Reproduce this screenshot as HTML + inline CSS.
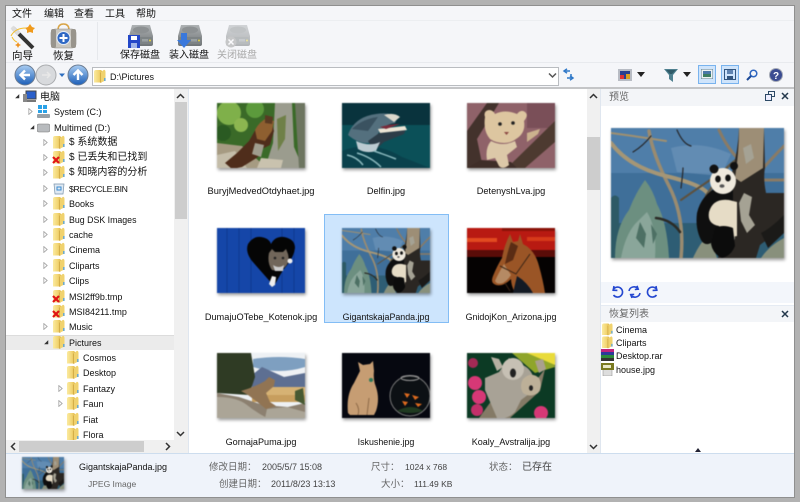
<!DOCTYPE html>
<html><head><meta charset="utf-8"><style>
html,body{margin:0;padding:0;background:#b2b2b2}
#w{position:relative;width:800px;height:502px;overflow:hidden;background:#b2b2b2;font:10px/12px "Liberation Sans","Noto Sans CJK SC",sans-serif;color:#111}
#w div,#w svg{position:absolute}
.t{white-space:nowrap;transform:translateY(2px)}
.c{text-align:center;white-space:nowrap;transform:translateY(1px)}
.g{color:#666}
.l{font-size:9px;transform:translateY(1px)}
.ph{filter:blur(.4px);box-shadow:1px 2px 3px rgba(0,0,0,.4)}
</style></head><body><div id="w">
<svg width="0" height="0" style="left:0;top:0"><defs>
<linearGradient id="fg" x1="0" y1="0" x2="1" y2="0"><stop offset="0" stop-color="#fbeaa0"/><stop offset=".6" stop-color="#f2d573"/><stop offset="1" stop-color="#e0b84c"/></linearGradient>
<linearGradient id="bl" x1="0" y1="0" x2="0" y2="1"><stop offset="0" stop-color="#a9cdf2"/><stop offset="1" stop-color="#1c5fb8"/></linearGradient>
<linearGradient id="dk" x1="0" y1="0" x2="0" y2="1"><stop offset="0" stop-color="#aeb2b4"/><stop offset="1" stop-color="#6f7476"/></linearGradient>
<symbol id="folder" viewBox="0 0 12 14"><path d="M0 3Q0 1 2 1H7L8 2V13.500H0z" fill="url(#fg)"/><path d="M6.500 3.500L10 .8Q11.500 1 11.500 3V11.500L6.500 13.800z" fill="#f0d26e"/><path d="M6.500 3.500V13.800" stroke="#cfa642" stroke-width=".8"/><rect x="10" y="9" width="1.600" height="3" fill="#6fa9c9"/></symbol>
<symbol id="x" viewBox="0 0 8 8"><path d="M1 1l6 6M7 1L1 7" stroke="#e01515" stroke-width="2.200"/></symbol>
<symbol id="op" viewBox="0 0 6 8"><path d="M1 .5L5 4 1 7.500z" fill="#fff" stroke="#a3a3a3"/></symbol>
<symbol id="ex" viewBox="0 0 8 8"><path d="M7 1.500V7H1.500z" fill="#333"/></symbol>
<symbol id="disk" viewBox="0 0 26 24"><path d="M4 1h18l3 11v8a2 2 0 0 1-2 2H3a2 2 0 0 1-2-2v-8z" fill="url(#dk)"/><ellipse cx="13" cy="6" rx="8" ry="3.500" fill="#8d9193"/><rect x="2" y="13" width="22" height="7" rx="1" fill="#7d8385"/><rect x="14" y="15" width="6" height="2.500" fill="#9aa0a2"/><circle cx="22" cy="16.500" r="1" fill="#e8d23c"/></symbol>
<symbol id="panda" viewBox="0 0 173 130" preserveAspectRatio="none">
<rect width="173" height="130" fill="#3f6f99"/>
<rect width="173" height="45" fill="#4f7ea9"/>
<rect y="95" width="173" height="35" fill="#2e5d74"/>
<path d="M60 20q30-8 60 6l-10 22-44-4z" fill="#7397bb" opacity=".55"/>
<path d="M0 70q4-5 8 0v60H0z" fill="#2d5a66"/>
<path d="M4 130q0-30 14-48q6-16 16-30q8 10 12 24q10 18 12 54z" fill="#6c8f80"/>
<path d="M10 130q4-22 14-34q8-8 12-12q10 16 8 46z" fill="#8aa69a"/>
<path d="M25 110l4-16 6 12-2 14zM40 96l6 10-4 10z" fill="#4d7064"/>
<path d="M82 130q6-14 16-24l8 24zM150 130q8-12 23-20v20z" fill="#88907c"/>
<g fill="none" stroke-linecap="round">
<path d="M0 5q30 4 55 8" stroke="#a09070" stroke-width="2"/>
<path d="M38 3q4 24 20 55t12 72" stroke="#9a8b70" stroke-width="3.500"/>
<path d="M0 15q18 24 55 33t42 18" stroke="#a59676" stroke-width="4"/>
<path d="M95 68q4-6 14-20t26-22" stroke="#5f5746" stroke-width="2.500"/>
<path d="M70 72q20-14 44-30" stroke="#5e513e" stroke-width="2"/>
<path d="M108 2q8 18 22 32M173 18q-12 12-26 28M148 52h27" stroke="#8a7b65" stroke-width="3"/>
<path d="M45 90q16 2 24 14" stroke="#2b2b26" stroke-width="2.500"/>
<path d="M66 2q6 14 14 16M22 24q10-6 18-16M70 60q2-16 2-20" stroke="#26272a" stroke-width="1.200"/>
</g>
<path d="M128 0h25l1 40q-2 10 1 25l18 0v36q-14 8-24 16l-4 13h-38l6-38q3-30 8-48q6-20 7-44z" fill="#2b2723"/>
<path d="M128 0h25l-1 40-22 14-6-4q4-25 4-50z" fill="#9d8e76"/>
<path d="M128 75l5-10 8 4-3 18 6 10-8 8-6-12zM117 100l5-4 2 14-4 12-5-4zM132 20l8-4 3 14-8 6z" fill="#a5a294"/>
<path d="M150 105q10-5 23-18v18l-16 15z" fill="#1b1a18"/>
<path d="M86 85q4-18 22-27l14 4v24q-4 10-16 14l-4 14q-8 5-12-2-6-12-4-27z" fill="#0f0f0f"/>
<path d="M98 84q4-14 20-12l8 2v34l-10 2q-6-4-8-12q-12-2-10-14z" fill="#e6dcc6"/>
<path d="M104 100q8-4 18 0l2 18q-4 10-13 12-9-4-11-14z" fill="#0c0c0c"/>
<ellipse cx="112" cy="53" rx="13" ry="13" fill="#efe9dd"/>
<circle cx="103" cy="41" r="4.500" fill="#111"/><circle cx="123" cy="38" r="4" fill="#111"/>
<ellipse cx="107" cy="51" rx="2.800" ry="3.500" fill="#111"/><ellipse cx="117" cy="50" rx="2.800" ry="3.500" fill="#111"/><ellipse cx="111" cy="58" rx="2.500" ry="1.800" fill="#555"/>
</symbol>
</defs></svg>

<!-- window -->
<div style="left:5px;top:5px;width:790px;height:493px;background:#8f8f8f"></div>
<div style="left:6px;top:6px;width:788px;height:491px;background:#fff"></div>
<div style="left:6px;top:6px;width:788px;height:81px;background:#f5f6f9"></div>
<div style="left:6px;top:20px;width:788px;height:1px;background:#eceef1"></div>
<div style="left:6px;top:62px;width:788px;height:1px;background:#e8eaee"></div>
<div style="left:97px;top:22px;width:1px;height:38px;background:#e6e8ec"></div>
<div style="left:6px;top:87px;width:788px;height:2px;background:#c4c5c7"></div>
<!-- menu -->
<div class="t" style="left:12px;top:7px">文件</div>
<div class="t" style="left:44px;top:7px">编辑</div>
<div class="t" style="left:74px;top:7px">查看</div>
<div class="t" style="left:105px;top:7px">工具</div>
<div class="t" style="left:136px;top:7px">帮助</div>
<!-- toolbar icons -->
<svg style="left:9px;top:23px" width="27" height="27" viewBox="0 0 27 27"><path d="M4 5l20 20" stroke="#333" stroke-width="4"/><path d="M3 4l7 7" stroke="#ddd" stroke-width="4"/><path d="M21 1l2 3 3 1-2 2 0 3-3-1-3 1 0-3-2-2 3-1z" fill="#f09a1c"/><path d="M9 19l1 2 2 1-2 1-1 2-1-2-2-1 2-1z" fill="#ee9220"/><path d="M2 13q4-8 15-8M3 14q2 4 5 5" fill="none" stroke="#f5c02e" stroke-width="1"/></svg>
<svg style="left:50px;top:23px" width="27" height="26" viewBox="0 0 27 26"><path d="M8 7q0-6 5.500-6T19 7" fill="none" stroke="#d9a548" stroke-width="1.500"/><rect x="1" y="6" width="25" height="19" rx="4" fill="#c9c6bf" stroke="#8d8a84" stroke-width=".6"/><rect x="1" y="6" width="5" height="19" rx="2" fill="#98948c"/><rect x="21" y="6" width="5" height="19" rx="2" fill="#98948c"/><circle cx="13.500" cy="15" r="6.500" fill="#2f68c4" stroke="#e6eef8"/><path d="M13.500 11v8M9.500 15h8" stroke="#fff" stroke-width="2"/></svg>
<svg style="left:128px;top:24px" width="26" height="24"><use href="#disk" width="26" height="24"/><rect x="0" y="11" width="12" height="13" fill="#2347c8"/><rect x="3" y="12" width="6" height="4" fill="#fff"/><rect x="3" y="19" width="6" height="5" fill="#9fb4e8"/></svg>
<svg style="left:177px;top:24px" width="26" height="24"><use href="#disk" width="26" height="24"/><path d="M3 9h6v7h4l-7 8-7-8h4z" fill="#3a78dc" transform="translate(1 0)"/></svg>
<svg style="left:225px;top:24px;opacity:.5" width="26" height="24"><use href="#disk" width="26" height="24"/><circle cx="6" cy="18" r="5.500" fill="#999"/><path d="M3.500 15.500l5 5M8.500 15.500l-5 5" stroke="#fff" stroke-width="1.500"/></svg>
<div class="t" style="left:12px;top:48px;font-size:10.500px">向导</div>
<div class="t" style="left:53px;top:48px;font-size:10.500px">恢复</div>
<div class="t" style="left:120px;top:48px">保存磁盘</div>
<div class="t" style="left:169px;top:48px">装入磁盘</div>
<div class="t" style="left:217px;top:48px;color:#aaa">关闭磁盘</div>
<!-- nav -->
<svg style="left:14px;top:63px" width="76" height="24" viewBox="0 0 76 24">
<circle cx="32" cy="12" r="10" fill="#d8dadd" stroke="#a9abae"/><path d="M28 12h8m-3-3l3 3-3 3" stroke="#e8e8e8" stroke-width="1.500" fill="none"/>
<circle cx="11" cy="12" r="10" fill="url(#bl)" stroke="#6b7c93"/><path d="M16 12H7m4-4.500L6.500 12l4.500 4.500" stroke="#fff" stroke-width="2.400" fill="none"/>
<path d="M45 10.500h6l-3 3.500z" fill="#2f6fc0"/>
<circle cx="64" cy="12" r="10" fill="url(#bl)" stroke="#6b7c93"/><path d="M64 17V8m-4.500 4L64 7.500l4.500 4.500" stroke="#fff" stroke-width="2.400" fill="none"/></svg>
<div style="left:92px;top:67px;width:465px;height:17px;background:#fff;border:1px solid #b9bcc0"></div>
<svg style="left:94px;top:69px" width="12" height="14"><use href="#folder" width="12" height="14"/></svg>
<div class="t l" style="left:110px;top:70px">D:\Pictures</div>
<svg style="left:548px;top:72px" width="9" height="7"><path d="M1 1.500l3.500 3.500 3.500-3.500" stroke="#555" stroke-width="1.500" fill="none"/></svg>
<svg style="left:562px;top:68px" width="13" height="14" viewBox="0 0 13 14"><path d="M8 3H3.500M5 .8L2 3l3 2.200" stroke="#2f78c8" stroke-width="1.500" fill="none"/><path d="M5 10h4.500M8 7.800l3 2.200-3 2.200M9 6v4" stroke="#2f78c8" stroke-width="1.500" fill="none"/></svg>
<!-- right nav icons -->
<svg style="left:618px;top:69px" width="14" height="12"><rect width="14" height="12" fill="#b8bcc4"/><rect x="2" y="2" width="10" height="8" fill="#27408f"/><rect x="2" y="6" width="4" height="4" fill="#d33"/><rect x="8" y="5" width="4" height="5" fill="#d9a020"/></svg>
<svg style="left:637px;top:72px" width="8" height="5"><path d="M0 0h8L4 5z" fill="#222"/></svg>
<svg style="left:664px;top:69px" width="14" height="13" viewBox="0 0 14 13"><path d="M0 0h14L9 6v7L5 10V6z" fill="#4f8090"/><path d="M2 1h10L8 5H6z" fill="#2f5a68"/></svg>
<svg style="left:683px;top:72px" width="8" height="5"><path d="M0 0h8L4 5z" fill="#222"/></svg>
<div style="left:698px;top:65px;width:16px;height:17px;background:#cfe4fb;border:1px solid #79b3ee"></div>
<svg style="left:701px;top:69px" width="12" height="10"><rect width="12" height="10" fill="#eef2f3" stroke="#5d7f8f"/><rect x="2" y="5" width="8" height="3" fill="#3d7d62"/><rect x="2" y="2" width="8" height="3" fill="#4a78a8"/></svg>
<div style="left:721px;top:65px;width:16px;height:17px;background:#cfe4fb;border:1px solid #79b3ee"></div>
<svg style="left:724px;top:69px" width="12" height="11"><path d="M.5.500h11v10H.5z" fill="#cfe4fb" stroke="#33567f"/><rect x="3" y="1" width="6" height="4" fill="#5f83b0"/><rect x="3" y="7" width="6" height="3" fill="#33567f"/></svg>
<svg style="left:746px;top:69px" width="12" height="12"><circle cx="7.500" cy="4.500" r="3.300" fill="none" stroke="#2f66c0" stroke-width="1.500"/><path d="M5 7L1 11" stroke="#1d4a98" stroke-width="2"/></svg>
<svg style="left:769px;top:68px" width="14" height="14"><circle cx="7" cy="7" r="6.500" fill="#3b4c91"/><circle cx="7" cy="7" r="6.500" fill="none" stroke="#a5aab6"/><text x="7" y="11" text-anchor="middle" font-family="Liberation Sans" font-weight="bold" font-size="10" fill="#fff">?</text></svg>

<!-- tree -->
<div style="left:6px;top:335px;width:168px;height:15px;background:#ebebeb"></div>
<div style="left:6px;top:335px;width:168px;height:1px;background:#dcdcdc"></div>
<svg style="left:14px;top:93px" width="6" height="6"><use href="#ex" width="6" height="6"/></svg>
<svg style="left:23px;top:90px" width="14" height="13"><rect x="3" y="1" width="10" height="8" fill="#2a5fc9" stroke="#444"/><rect x="0" y="4" width="4" height="8" fill="#888"/><rect x="4" y="10" width="9" height="2" fill="#777"/></svg>
<div class="t" style="left:40px;top:90px">电脑</div>
<svg style="left:28px;top:108px" width="5" height="7"><use href="#op" width="5" height="7"/></svg>
<svg style="left:37px;top:104px" width="13" height="14"><rect x="1" y="1" width="4" height="4" fill="#2aa2e8"/><rect x="6" y="1" width="4" height="4" fill="#2aa2e8"/><rect x="1" y="6" width="4" height="3" fill="#2aa2e8"/><rect x="6" y="6" width="4" height="3" fill="#2aa2e8"/><rect y="10" width="13" height="4" rx="1" fill="#98a0a6"/></svg>
<div class="t l" style="left:54px;top:105px">System (C:)</div>
<svg style="left:29px;top:124px" width="6" height="6"><use href="#ex" width="6" height="6"/></svg>
<svg style="left:37px;top:123px" width="13" height="10"><rect y="1" width="13" height="8" rx="2" fill="#b8bbbe" stroke="#777" stroke-width=".6"/></svg>
<div class="t l" style="left:54px;top:121px;font-size:9.400px">Multimed (D:)</div>

<svg style="left:43px;top:139px" width="5" height="7"><use href="#op" width="5" height="7"/></svg><svg style="left:53px;top:135px" width="12" height="14"><use href="#folder" width="12" height="14"/></svg><div class="t" style="left:69px;top:135px;font-size:10px">$ 系统数据</div>
<svg style="left:43px;top:154px" width="5" height="7"><use href="#op" width="5" height="7"/></svg><svg style="left:53px;top:150px" width="12" height="14"><use href="#folder" width="12" height="14"/></svg><svg style="left:52px;top:156px" width="8" height="8"><use href="#x" width="8" height="8"/></svg><div class="t" style="left:69px;top:150px;font-size:10px">$ 已丢失和已找到</div>
<svg style="left:43px;top:169px" width="5" height="7"><use href="#op" width="5" height="7"/></svg><svg style="left:53px;top:165px" width="12" height="14"><use href="#folder" width="12" height="14"/></svg><div class="t" style="left:69px;top:165px;font-size:10px">$ 知晓内容的分析</div>
<svg style="left:43px;top:185px" width="5" height="7"><use href="#op" width="5" height="7"/></svg><svg style="left:53px;top:181px" width="12" height="14"><path d="M1 3h10l-1 10H2z" fill="#dfe9f3" stroke="#7a93aa" stroke-width=".7"/><path d="M4 6h4v3H4z" fill="none" stroke="#3a8cd0"/></svg><div class="t l" style="left:69px;top:182px;font-size:8.700px;letter-spacing:-.35px">$RECYCLE.BIN</div>
<svg style="left:43px;top:200px" width="5" height="7"><use href="#op" width="5" height="7"/></svg><svg style="left:53px;top:196px" width="12" height="14"><use href="#folder" width="12" height="14"/></svg><div class="t l" style="left:69px;top:197px">Books</div>
<svg style="left:43px;top:216px" width="5" height="7"><use href="#op" width="5" height="7"/></svg><svg style="left:53px;top:212px" width="12" height="14"><use href="#folder" width="12" height="14"/></svg><div class="t l" style="left:69px;top:213px;font-size:8.800px">Bug DSK Images</div>
<svg style="left:43px;top:231px" width="5" height="7"><use href="#op" width="5" height="7"/></svg><svg style="left:53px;top:227px" width="12" height="14"><use href="#folder" width="12" height="14"/></svg><div class="t l" style="left:69px;top:228px">cache</div>
<svg style="left:43px;top:246px" width="5" height="7"><use href="#op" width="5" height="7"/></svg><svg style="left:53px;top:242px" width="12" height="14"><use href="#folder" width="12" height="14"/></svg><div class="t l" style="left:69px;top:243px">Cinema</div>
<svg style="left:43px;top:262px" width="5" height="7"><use href="#op" width="5" height="7"/></svg><svg style="left:53px;top:258px" width="12" height="14"><use href="#folder" width="12" height="14"/></svg><div class="t l" style="left:69px;top:259px">Cliparts</div>
<svg style="left:43px;top:277px" width="5" height="7"><use href="#op" width="5" height="7"/></svg><svg style="left:53px;top:273px" width="12" height="14"><use href="#folder" width="12" height="14"/></svg><div class="t l" style="left:69px;top:274px">Clips</div>
<svg style="left:53px;top:289px" width="12" height="14"><use href="#folder" width="12" height="14"/></svg><svg style="left:52px;top:295px" width="8" height="8"><use href="#x" width="8" height="8"/></svg><div class="t l" style="left:69px;top:290px">MSI2ff9b.tmp</div>
<svg style="left:53px;top:304px" width="12" height="14"><use href="#folder" width="12" height="14"/></svg><svg style="left:52px;top:310px" width="8" height="8"><use href="#x" width="8" height="8"/></svg><div class="t l" style="left:69px;top:305px">MSI84211.tmp</div>
<svg style="left:43px;top:323px" width="5" height="7"><use href="#op" width="5" height="7"/></svg><svg style="left:53px;top:319px" width="12" height="14"><use href="#folder" width="12" height="14"/></svg><div class="t l" style="left:69px;top:320px">Music</div>
<svg style="left:43px;top:339px" width="6" height="6"><use href="#ex" width="6" height="6"/></svg><svg style="left:53px;top:335px" width="12" height="14"><use href="#folder" width="12" height="14"/></svg><div class="t l" style="left:69px;top:336px">Pictures</div>
<svg style="left:67px;top:350px" width="12" height="14"><use href="#folder" width="12" height="14"/></svg><div class="t l" style="left:83px;top:351px">Cosmos</div>
<svg style="left:67px;top:365px" width="12" height="14"><use href="#folder" width="12" height="14"/></svg><div class="t l" style="left:83px;top:366px">Desktop</div>
<svg style="left:58px;top:385px" width="5" height="7"><use href="#op" width="5" height="7"/></svg><svg style="left:67px;top:381px" width="12" height="14"><use href="#folder" width="12" height="14"/></svg><div class="t l" style="left:83px;top:382px">Fantazy</div>
<svg style="left:58px;top:400px" width="5" height="7"><use href="#op" width="5" height="7"/></svg><svg style="left:67px;top:396px" width="12" height="14"><use href="#folder" width="12" height="14"/></svg><div class="t l" style="left:83px;top:397px">Faun</div>
<svg style="left:67px;top:412px" width="12" height="14"><use href="#folder" width="12" height="14"/></svg><div class="t l" style="left:83px;top:413px">Fiat</div>
<svg style="left:67px;top:427px" width="12" height="14"><use href="#folder" width="12" height="14"/></svg><div class="t l" style="left:83px;top:428px">Flora</div>

<!-- tree scrollbars -->
<div style="left:174px;top:89px;width:14px;height:351px;background:#f0f0f0"></div>
<div style="left:175px;top:102px;width:12px;height:117px;background:#cdcdcd"></div>
<svg style="left:176px;top:93px" width="9" height="6"><path d="M1 5l3.500-3.500L8 5" stroke="#333" stroke-width="1.500" fill="none"/></svg>
<svg style="left:176px;top:431px" width="9" height="6"><path d="M1 1l3.500 3.500L8 1" stroke="#333" stroke-width="1.500" fill="none"/></svg>
<div style="left:6px;top:440px;width:182px;height:13px;background:#f0f0f0"></div>
<div style="left:19px;top:441px;width:125px;height:11px;background:#cdcdcd"></div>
<svg style="left:10px;top:442px" width="6" height="9"><path d="M5 1L1.500 4.500 5 8" stroke="#333" stroke-width="1.500" fill="none"/></svg>
<svg style="left:165px;top:442px" width="6" height="9"><path d="M1 1l3.500 3.500L1 8" stroke="#333" stroke-width="1.500" fill="none"/></svg>
<div style="left:188px;top:89px;width:1px;height:364px;background:#dfe6ef"></div>

<!-- selection -->
<div style="left:324px;top:214px;width:123px;height:107px;background:#cde5fd;border:1px solid #83bdf5"></div>

<!-- photos row 1 -->
<svg class="ph" style="left:217px;top:103px" width="88" height="65" viewBox="0 0 88 65"><rect width="88" height="65" fill="#3a6a28"/><circle cx="12" cy="10" r="12" fill="#7fb04a"/><circle cx="38" cy="6" r="9" fill="#5c9a3c"/><circle cx="24" cy="22" r="7" fill="#8cb650"/><circle cx="6" cy="30" r="8" fill="#2a5a22"/><path d="M0 40l25 3 25 22H0z" fill="#a69b82"/><path d="M0 52l18-4 12 17H0z" fill="#c4bda9"/><path d="M58 0h17l2 44 9 21H48l8-25z" fill="#9b9c8e"/><path d="M60 16l9-4-1 24-7 12z" fill="#6f8048"/><path d="M78 0h10v65h-6z" fill="#6d7560"/><path d="M8 60l12-10 12-12 8-14q6-6 14-8l3 12-4 14-8 4-4 8-16 10-10 2z" fill="#4f2d1b"/><path d="M38 27q4-8 12-12l7 3-2 10-7 10-8-2z" fill="#8e5f30"/><path d="M48 12l8 2-1 7-7-1z" fill="#5a3a22"/><path d="M38 40l9 2-3 12-9-3z" fill="#a09d8e"/><path d="M44 55l22 2-2 8H40z" fill="#c9c2ae"/></svg>
<svg class="ph" style="left:342px;top:103px" width="88" height="65" viewBox="0 0 88 65"><rect width="88" height="65" fill="#0b5058"/><rect width="88" height="22" fill="#09333d"/><path d="M0 48q30-12 60 6l28 11H0z" fill="#0a414c"/><path d="M6 32q6-18 28-21 14-2 22 3l-3 6q-10 1-16 9l-6 10q-12 4-25-7z" fill="#54707e"/><path d="M10 26q10-10 26-12l-10 14z" fill="#3a5260"/><path d="M42 12q10-3 16 2l-6 5z" fill="#dcd8cc"/><path d="M26 38l14-10 24-2-2 5-20 8-10 9z" fill="#2d3d48"/><path d="M36 26l27-3 2 4-27 3z" fill="#ece5d5"/><path d="M38 24q10-3 20-3l-14 5z" fill="#7a2b3a"/><path d="M14 38q14 6 24 1l-4 9q-10 3-18-2z" fill="#bccbd1"/><path d="M15 50q14 4 24 14M32 48q12 4 22 8M5 52q10 2 16 10" stroke="#8ab8bd" stroke-width="1.500" fill="none"/></svg>
<svg class="ph" style="left:467px;top:103px" width="88" height="65" viewBox="0 0 88 65"><rect width="88" height="65" fill="#8f6269"/><rect x="60" width="28" height="25" fill="#7a4f58"/><path d="M0 28L20 0h12L10 36l6 29H0z" fill="#43322c"/><path d="M40 65L88 18v21L58 65z" fill="#4d3a30"/><path d="M0 65h50l-6-6-30-2z" fill="#3f2e28"/><path d="M18 14q-2-6 4-7 4 0 6 4 10-5 22 0 4-5 8-2 4 3-1 9 2 12-8 18-5 4-12 4-8 0-14-4-7-8-5-22z" fill="#ddc6a0"/><circle cx="33" cy="21" r="1.800" fill="#222"/><circle cx="46" cy="20" r="1.800" fill="#222"/><path d="M37 29h5l-2.500 3z" fill="#8d4a44"/><path d="M24 38q12 6 24 0l2 6-10 8 2 10q-6 5-10 1l-4-8-8 2q-2-12 4-19z" fill="#dcc8a8"/><path d="M60 30l13-4-2 5-11 8z" fill="#cbb28e"/></svg>

<!-- row 2 -->
<svg class="ph" style="left:217px;top:228px" width="88" height="65" viewBox="0 0 88 65"><rect width="88" height="65" fill="#1546a8"/><path d="M10 0v65M22 0v65M34 0v65M65 0v65M77 0v65" stroke="#0f3a90" stroke-width="1"/><path d="M57 58L35 33Q28 24 31 16Q36 8 44 9Q52 10 54 16Q58 8 67 9Q78 11 78 20Q77 30 66 42z" fill="#050505"/><path d="M52 25l3-4 3 3h8l3-3 2 5q2 8-3 13-6 5-13 3-5-7-3-17z" fill="#71665a"/><circle cx="58" cy="30" r="1.300" fill="#222"/><circle cx="66" cy="30" r="1.300" fill="#222"/><path d="M56 37q6 4 11 0l-1 6H58z" fill="#ccc"/><circle cx="73" cy="33" r="2.500" fill="#eee"/><path d="M55 48l4 1-1 8-3 2-3-3z" fill="#eee"/></svg>
<svg class="ph" style="left:342px;top:228px" width="88" height="65"><use href="#panda" width="88" height="65"/></svg>
<svg class="ph" style="left:467px;top:228px" width="88" height="65" viewBox="0 0 88 65"><rect width="88" height="65" fill="#050202"/><rect width="88" height="22" fill="#b81a12"/><rect y="22" width="88" height="7" fill="#5a0c08"/><rect x="0" y="10" width="30" height="4" fill="#e24a20"/><rect x="35" y="0" width="53" height="3" fill="#8a1208"/><rect x="60" y="9" width="28" height="4" fill="#d63a1a"/><path d="M43 6l3 8 5-1 2-7 3 10q12 6 16 22 4 14 6 27H48q-4-8-4-14-8 8-15 6-6-2-3-9 4-10 9-18 2-12 8-24z" fill="#9a5526"/><path d="M37 36q-6 10-9 17 2 4 8 2 5-3 8-8z" fill="#b58a64"/><path d="M44 14q-3 8-6 22l8-4 5-14z" fill="#5a2c14"/><path d="M33 38l16 8 14-20M38 55l5 8" stroke="#3a2516" fill="none"/><path d="M50 48q10 6 16 17H46z" fill="#141a24"/></svg>

<!-- row 3 -->
<svg class="ph" style="left:217px;top:353px" width="88" height="65" viewBox="0 0 88 65"><rect width="88" height="65" fill="#eef1f4"/><path d="M36 6q26-4 52 0v8q-26 8-52 0z" fill="#7e9fc0"/><path d="M35 22l10-8 22 10 21-4v16H35z" fill="#5d6f92"/><rect x="35" y="34" width="53" height="8" fill="#d6b274"/><rect x="35" y="42" width="53" height="7" fill="#c79e5e"/><path d="M0 40V0h34l4 24-6 18z" fill="#2f3b24"/><path d="M0 40l22 4 24 8 25 2 17-4v15H0z" fill="#8c8070"/><path d="M0 44q20 0 30 8t20 13H0zM50 56l20-2 18 5v6H48z" fill="#aba597"/><path d="M24 38q14-4 24-10l4-4 6 3-1 6-8 7 4 9 6 4-10 3-10-8-8-6z" fill="#917453"/><path d="M78 38l8-3 2 17-10-5z" fill="#475932"/></svg>
<svg class="ph" style="left:342px;top:353px" width="88" height="65" viewBox="0 0 88 65"><rect width="88" height="65" fill="#060810"/><path d="M6 60q-2-18 6-30l6-12-2-9 5 3 7-1 3-3 1 10q-1 9 2 16 4 12 0 24l-2 4H8z" fill="#c69d73"/><path d="M14 50q4 6 2 12M27 45l-2 17" stroke="#8d6a48" fill="none"/><circle cx="29" cy="27" r="2" fill="#2f7a5a"/><circle cx="68" cy="43" r="20" fill="#0c1014" stroke="#777" stroke-width="1"/><ellipse cx="68" cy="25" rx="9" ry="2.500" fill="none" stroke="#999"/><path d="M62 40l6 1-3 4zM70 42l7 2-4 3zM60 48l6 1-3 4zM73 50l7 1-4 3z" fill="#dd6a1e"/><path d="M55 58q14 4 26 0-12-8-26 0z" fill="#1f3a20"/></svg>
<svg class="ph" style="left:467px;top:353px" width="88" height="65" viewBox="0 0 88 65"><rect width="88" height="65" fill="#0c3a24"/><path d="M45 0h40l3 14-20 6z" fill="#8fa52a"/><path d="M60 0l28 12V0z" fill="#e9db3a"/><circle cx="8" cy="30" r="7" fill="#d63876"/><circle cx="12" cy="44" r="7" fill="#d63876"/><circle cx="10" cy="57" r="6" fill="#c2306a"/><circle cx="74" cy="60" r="7" fill="#d63876"/><circle cx="6" cy="10" r="5" fill="#a32a55"/><path d="M12 65L30 40l16-8 18 2 14-18-5 22-20 18-10 9z" fill="#847a66"/><path d="M18 25l14-6 10-14 10 6q10 2 14 12 4 10-4 18l-8 6-6 12q-8 8-18 6l-6-14-6-14z" fill="#a8a296"/><path d="M24 4l8 2 4 8-6 4z" fill="#b6b0a2"/><circle cx="46" cy="16" r="11" fill="#c6c0b4"/><ellipse cx="46" cy="20" rx="3" ry="4.500" fill="#222"/><path d="M56 26q8-8 16-1 4 8-1 15-8 5-15 0-4-7 0-14z" fill="#bdb098"/><ellipse cx="64" cy="35" rx="2" ry="2.800" fill="#222"/><path d="M68 8l8-2 3 10-7 4z" fill="#aaa08e"/></svg>

<!-- labels -->
<div class="c" style="left:190px;top:184px;width:142px;font-size:9.300px">BuryjMedvedOtdyhaet.jpg</div>
<div class="c" style="left:315px;top:184px;width:142px;font-size:9.200px">Delfin.jpg</div>
<div class="c" style="left:440px;top:184px;width:142px;font-size:9.200px">DetenyshLva.jpg</div>
<div class="c" style="left:190px;top:310px;width:142px;font-size:9.200px">DumajuOTebe_Kotenok.jpg</div>
<div class="c" style="left:315px;top:310px;width:142px;font-size:8.900px">GigantskajaPanda.jpg</div>
<div class="c" style="left:440px;top:310px;width:142px;font-size:8.900px">GnidojKon_Arizona.jpg</div>
<div class="c" style="left:190px;top:435px;width:142px;font-size:9.100px">GornajaPuma.jpg</div>
<div class="c" style="left:315px;top:435px;width:142px;font-size:8.900px">Iskushenie.jpg</div>
<div class="c" style="left:440px;top:435px;width:142px;font-size:9px">Koaly_Avstralija.jpg</div>

<!-- content scrollbar -->
<div style="left:587px;top:89px;width:13px;height:364px;background:#f0f0f0"></div>
<div style="left:587px;top:137px;width:13px;height:53px;background:#cdcdcd"></div>
<svg style="left:589px;top:93px" width="9" height="6"><path d="M1 5l3.500-3.500L8 5" stroke="#333" stroke-width="1.500" fill="none"/></svg>
<svg style="left:589px;top:444px" width="9" height="6"><path d="M1 1l3.500 3.500L8 1" stroke="#333" stroke-width="1.500" fill="none"/></svg>
<div style="left:600px;top:89px;width:1px;height:364px;background:#dfe6ef"></div>

<!-- preview panel -->
<div style="left:601px;top:89px;width:193px;height:17px;background:#f3f5f8"></div>
<div class="t g" style="left:609px;top:90px">预览</div>
<svg style="left:765px;top:91px" width="10" height="10"><rect x="3.500" y=".5" width="6" height="5" fill="none" stroke="#2d4a66"/><rect x=".5" y="3.500" width="6" height="6" fill="#eef" stroke="#2d4a66"/></svg>
<svg style="left:781px;top:92px" width="8" height="8"><path d="M1 1l6 6M7 1L1 7" stroke="#24384c" stroke-width="1.500"/></svg>
<svg class="ph" style="left:611px;top:128px" width="173" height="130"><use href="#panda" width="173" height="130"/></svg>
<div style="left:601px;top:282px;width:193px;height:21px;background:#f3f6fb"></div>
<svg style="left:610px;top:285px" width="50" height="14" viewBox="0 0 50 14" fill="none" stroke="#2548d0" stroke-width="1.600"><path d="M3 5a5 5 0 1 1 .5 5M4 1l-.8 4.200 4.200.2"/><path d="M19 6a5 5 0 0 1 9-2M30 8a5 5 0 0 1-9 2M27 .8l1.200 3.400-3.400.3M22 13l-1.300-3.400 3.500-.2"/><path d="M47 5a5 5 0 1 0-.5 5M46 1l.8 4.200-4.200.2"/></svg>
<div style="left:601px;top:305px;width:193px;height:17px;background:#f3f5f8;border-top:1px solid #e5ebf3;box-sizing:border-box"></div>
<div class="t g" style="left:609px;top:307px">恢复列表</div>
<svg style="left:781px;top:310px" width="8" height="8"><path d="M1 1l6 6M7 1L1 7" stroke="#24384c" stroke-width="1.500"/></svg>
<svg style="left:602px;top:322px" width="11" height="14"><use href="#folder" width="11" height="14"/></svg><div class="t l" style="left:616px;top:323px">Cinema</div>
<svg style="left:602px;top:335px" width="11" height="14"><use href="#folder" width="11" height="14"/></svg><div class="t l" style="left:616px;top:336px">Cliparts</div>
<svg style="left:601px;top:349px" width="13" height="13"><rect y="0" width="13" height="3" fill="#c0247e"/><rect y="3" width="13" height="3" fill="#2c3a9a"/><rect y="6" width="13" height="3" fill="#2c8a3a"/><rect y="9" width="13" height="3" fill="#333"/></svg><div class="t l" style="left:616px;top:349px">Desktop.rar</div>
<svg style="left:601px;top:362px" width="13" height="14"><rect x="2" y="6" width="9" height="8" fill="#ddd" stroke="#888" stroke-width=".5"/><rect y="1" width="13" height="7" fill="#7a7a20"/><rect x="2" y="3" width="8" height="3" fill="#e8e8c8"/></svg><div class="t l" style="left:616px;top:363px">house.jpg</div>
<svg style="left:695px;top:448px" width="6" height="4"><path d="M0 4l3-4 3 4z" fill="#223"/></svg>

<!-- status -->
<div style="left:6px;top:453px;width:788px;height:44px;background:#eff3fa;border-top:1px solid #cdddee;box-sizing:border-box"></div>
<svg class="ph" style="left:22px;top:457px" width="42" height="32"><use href="#panda" width="42" height="32"/></svg>
<div class="t l" style="left:79px;top:460px">GigantskajaPanda.jpg</div>
<div class="t l g" style="left:88px;top:477px;font-size:8.500px">JPEG Image</div>
<div class="t g" style="left:209px;top:460px;font-size:9.500px">修改日期：</div>
<div class="t l" style="left:262px;top:460px;color:#444">2005/5/7 15:08</div>
<div class="t g" style="left:219px;top:477px;font-size:9.500px">创建日期：</div>
<div class="t l" style="left:271px;top:477px;color:#444">2011/8/23 13:13</div>
<div class="t g" style="left:371px;top:460px;font-size:9.500px">尺寸：</div>
<div class="t l" style="left:405px;top:460px;font-size:8.500px;color:#444">1024 x 768</div>
<div class="t g" style="left:381px;top:477px;font-size:9.500px">大小：</div>
<div class="t l" style="left:414px;top:477px;font-size:8.500px;color:#444">111.49 KB</div>
<div class="t g" style="left:489px;top:460px;font-size:9.500px">状态：</div>
<div class="t" style="left:522px;top:460px;color:#444">已存在</div>
</div></body></html>
